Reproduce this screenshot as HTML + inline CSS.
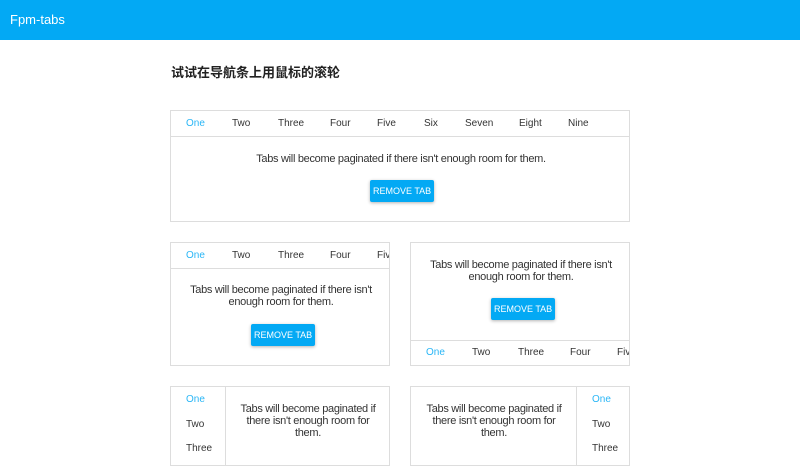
<!DOCTYPE html><html><head><meta charset="utf-8"><style>
*{margin:0;padding:0;box-sizing:border-box}
body{width:800px;height:450px;overflow:hidden;background:#fff;font-family:"Liberation Sans","Noto Sans CJK SC",sans-serif;color:#333;position:relative}
.hdr{position:absolute;left:0;top:0;width:800px;height:40px;background:#03a9f4;color:#fff;font-size:13px;padding:12px 10px}
h3{position:absolute;left:171px;top:62px;font-size:13px;font-weight:bold;color:#222}
.box{position:absolute;border:1px solid #ddd;overflow:hidden;background:#fff}
.t{position:absolute;font-size:10px;color:#333;white-space:nowrap}
.a{color:#29b6f6}
.msg{position:absolute;font-size:11px;letter-spacing:-0.3px;text-align:center;color:#333;line-height:12px}
.btn{position:absolute;background:#03a9f4;color:#fff;font-size:9px;height:22px;line-height:22px;padding:0 3px;border-radius:2px;box-shadow:0 1px 3px rgba(0,0,0,.3)}
.line{position:absolute;background:#ddd}
</style></head><body>
<div class="hdr">Fpm-tabs</div>
<h3>试试在导航条上用鼠标的滚轮</h3>

<div class="box" style="left:170px;top:110px;width:460px;height:112px">
<div class="line" style="left:0;top:25px;width:460px;height:1px"></div>
<span class="t a" style="left:15px;top:7px">One</span><span class="t" style="left:61px;top:7px">Two</span><span class="t" style="left:107px;top:7px">Three</span><span class="t" style="left:159px;top:7px">Four</span><span class="t" style="left:206px;top:7px">Five</span><span class="t" style="left:253px;top:7px">Six</span><span class="t" style="left:294px;top:7px">Seven</span><span class="t" style="left:348px;top:7px">Eight</span><span class="t" style="left:397px;top:7px">Nine</span>
<div class="msg" style="left:0;top:42px;width:460px">Tabs will become paginated if there isn't enough room for them.</div>
<div class="btn" style="left:199px;top:69px">REMOVE TAB</div>
</div>

<div class="box" style="left:170px;top:242px;width:220px;height:124px">
<div class="line" style="left:0;top:25px;width:220px;height:1px"></div>
<span class="t a" style="left:15px;top:7px">One</span><span class="t" style="left:61px;top:7px">Two</span><span class="t" style="left:107px;top:7px">Three</span><span class="t" style="left:159px;top:7px">Four</span><span class="t" style="left:206px;top:7px">Five</span>
<div class="msg" style="left:10px;top:41px;width:200px">Tabs will become paginated if there isn't enough room for them.</div>
<div class="btn" style="left:80px;top:81px">REMOVE TAB</div>
</div>

<div class="box" style="left:410px;top:242px;width:220px;height:124px">
<div class="msg" style="left:10px;top:16px;width:200px">Tabs will become paginated if there isn't enough room for them.</div>
<div class="btn" style="left:80px;top:55px">REMOVE TAB</div>
<div class="line" style="left:0;top:97px;width:220px;height:1px"></div>
<span class="t a" style="left:15px;top:104px">One</span><span class="t" style="left:61px;top:104px">Two</span><span class="t" style="left:107px;top:104px">Three</span><span class="t" style="left:159px;top:104px">Four</span><span class="t" style="left:206px;top:104px">Five</span>
</div>

<div class="box" style="left:170px;top:386px;width:220px;height:80px">
<div class="line" style="left:54px;top:0;width:1px;height:80px"></div>
<span class="t a" style="left:15px;top:7px">One</span><span class="t" style="left:15px;top:32px">Two</span><span class="t" style="left:15px;top:56px">Three</span>
<div class="msg" style="left:62px;top:16px;width:150px">Tabs will become paginated if there isn't enough room for them.</div>
</div>

<div class="box" style="left:410px;top:386px;width:220px;height:80px">
<div class="line" style="left:165px;top:0;width:1px;height:80px"></div>
<div class="msg" style="left:8px;top:16px;width:150px">Tabs will become paginated if there isn't enough room for them.</div>
<span class="t a" style="left:181px;top:7px">One</span><span class="t" style="left:181px;top:32px">Two</span><span class="t" style="left:181px;top:56px">Three</span>
</div>
</body></html>
